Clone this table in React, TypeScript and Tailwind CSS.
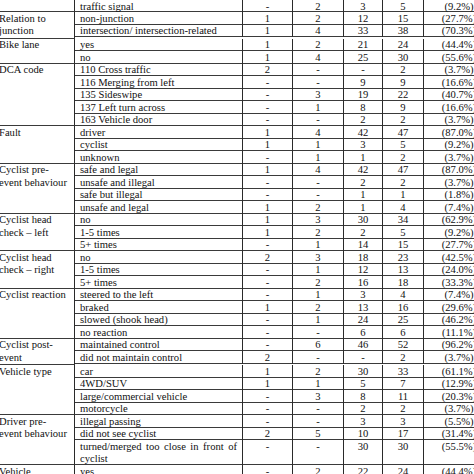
import React from "react";

type Row = { label: string; v: [string, string, string, string, string]; tall?: boolean };
type Group = { label: string[]; rows: Row[]; last?: boolean };

const r = (label: string, a: string, b: string, c: string, d: string, e: string, tall?: boolean): Row => ({
  label,
  v: [a, b, c, d, e],
  tall,
});

const groups: Group[] = [
  { label: [], rows: [r("traffic signal", "-", "2", "3", "5", "(9.2%)")] },
  {
    label: ["Relation to", "junction"],
    rows: [
      r("non-junction", "1", "2", "12", "15", "(27.7%)"),
      r("intersection/ intersection-related", "1", "4", "33", "38", "(70.3%)"),
    ],
  },
  {
    label: ["Bike lane"],
    rows: [r("yes", "1", "2", "21", "24", "(44.4%)"), r("no", "1", "4", "25", "30", "(55.6%)")],
  },
  {
    label: ["DCA code"],
    rows: [
      r("110 Cross traffic", "2", "-", "-", "2", "(3.7%)"),
      r("116 Merging from left", "-", "-", "9", "9", "(16.6%)"),
      r("135 Sideswipe", "-", "3", "19", "22", "(40.7%)"),
      r("137 Left turn across", "-", "1", "8", "9", "(16.6%)"),
      r("163 Vehicle door", "-", "-", "2", "2", "(3.7%)"),
    ],
  },
  {
    label: ["Fault"],
    rows: [
      r("driver", "1", "4", "42", "47", "(87.0%)"),
      r("cyclist", "1", "1", "3", "5", "(9.2%)"),
      r("unknown", "-", "1", "1", "2", "(3.7%)"),
    ],
  },
  {
    label: ["Cyclist pre-", "event behaviour"],
    rows: [
      r("safe and legal", "1", "4", "42", "47", "(87.0%)"),
      r("unsafe and illegal", "-", "-", "2", "2", "(3.7%)"),
      r("safe but illegal", "-", "-", "1", "1", "(1.8%)"),
      r("unsafe and legal", "1", "2", "1", "4", "(7.4%)"),
    ],
  },
  {
    label: ["Cyclist head", "check \u2013 left"],
    rows: [
      r("no", "1", "3", "30", "34", "(62.9%)"),
      r("1-5 times", "1", "2", "2", "5", "(9.2%)"),
      r("5+ times", "-", "1", "14", "15", "(27.7%)"),
    ],
  },
  {
    label: ["Cyclist head", "check \u2013 right"],
    rows: [
      r("no", "2", "3", "18", "23", "(42.5%)"),
      r("1-5 times", "-", "1", "12", "13", "(24.0%)"),
      r("5+ times", "-", "2", "16", "18", "(33.3%)"),
    ],
  },
  {
    label: ["Cyclist reaction"],
    rows: [
      r("steered to the left", "-", "1", "3", "4", "(7.4%)"),
      r("braked", "1", "2", "13", "16", "(29.6%)"),
      r("slowed (shook head)", "-", "1", "24", "25", "(46.2%)"),
      r("no reaction", "-", "-", "6", "6", "(11.1%)"),
    ],
  },
  {
    label: ["Cyclist post-", "event"],
    rows: [
      r("maintained control", "-", "6", "46", "52", "(96.2%)"),
      r("did not maintain control", "2", "-", "-", "2", "(3.7%)"),
    ],
  },
  {
    label: ["Vehicle type"],
    rows: [
      r("car", "1", "2", "30", "33", "(61.1%)"),
      r("4WD/SUV", "1", "1", "5", "7", "(12.9%)"),
      r("large/commercial vehicle", "-", "3", "8", "11", "(20.3%)"),
      r("motorcycle", "-", "-", "2", "2", "(3.7%)"),
    ],
  },
  {
    label: ["Driver pre-", "event behaviour"],
    rows: [
      r("illegal passing", "-", "-", "3", "3", "(5.5%)"),
      r("did not see cyclist", "2", "5", "10", "17", "(31.4%)"),
      r("turned/merged too close in front of cyclist", "-", "-", "30", "30", "(55.5%)", true),
    ],
  },
  {
    label: ["Vehicle"],
    last: true,
    rows: [r("yes", "-", "2", "22", "24", "(44.4%)")],
  },
];

export default function App() {
  let first = true;
  return (
    <div className="w-[474px] h-[474px] overflow-hidden bg-white text-[#111] font-['Liberation_Serif',serif] text-[10.6px]">
      <div className="w-[520px] flex flex-col">
        {groups.map((g, gi) => (
          <div key={gi} className="flex">
            <div
              className={
                "w-[75px] shrink-0 border-r border-r-[#2a2a2a] leading-[12.5px] pl-0 " +
                (g.last ? "" : "border-b border-b-[#3a3a3a]")
              }
            >
              <div className="-ml-px pt-[0.5px]">
                {g.label.map((l, li) => (
                  <div key={li} className="whitespace-nowrap">
                    {l}
                  </div>
                ))}
              </div>
            </div>
            <div className="flex flex-col">
              {g.rows.map((row, ri) => {
                const isFirst = first;
                first = false;
                const h = row.tall
                  ? "h-[25px] border-b border-b-[#3a3a3a]"
                  : g.last
                  ? "h-[11.5px] border-b-2 border-b-[#222]"
                  : isFirst
                  ? "h-[12px] border-b border-b-[#3a3a3a]"
                  : "h-[12.5px] border-b border-b-[#3a3a3a]";
                return (
                  <div
                    key={ri}
                    className={"grid grid-cols-[168px_50px_51px_39px_41px_70px] leading-[12px] " + h}
                  >
                    <div
                      className={
                        "border-r border-r-[#2a2a2a] pl-[5px] pr-[5px] pt-[0.5px] " +
                        (row.tall ? "text-justify" : "whitespace-nowrap")
                      }
                    >
                      {row.label}
                    </div>
                    {row.v.map((x, xi) => (
                      <div
                        key={xi}
                        className={
                          "text-center pt-[0.5px] whitespace-nowrap " +
                          (xi < 4 ? "border-r border-r-[#2a2a2a]" : "")
                        }
                      >
                        {x}
                      </div>
                    ))}
                  </div>
                );
              })}
            </div>
          </div>
        ))}
      </div>
    </div>
  );
}
